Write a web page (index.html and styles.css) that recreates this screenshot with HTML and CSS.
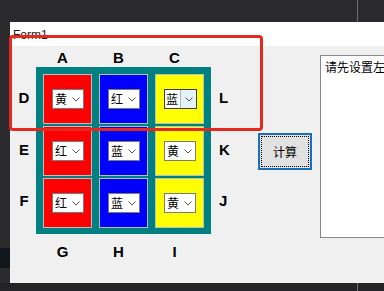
FILE: index.html
```html
<!DOCTYPE html>
<html lang="zh-CN">
<head>
  <meta charset="UTF-8" />
  <title>Form1</title>
  <link rel="stylesheet" href="styles.css">
</head>
<body>

<div class="topbar"><div class="sep"></div></div>

<div class="screen">
  <div class="side"><div class="side-block"></div></div>

  <div class="window">
    <div class="titlebar">Form1</div>
    <div class="client">
      <div class="board">
        <div></div>
        <div class="col-labels top"><span>A</span><span>B</span><span>C</span></div>
        <div></div>

        <div class="row-labels left"><span>D</span><span>E</span><span>F</span></div>
        <div class="panel">
          <div class="cell red"><div class="combo"><span class="val">黄</span><span class="arrow"><svg width="8" height="5" viewBox="0 0 8 5"><polyline points="0.5,0.5 4,4 7.5,0.5" fill="none" stroke="#555" stroke-width="1"/></svg></span></div></div>
          <div class="cell blue"><div class="combo"><span class="val">红</span><span class="arrow"><svg width="8" height="5" viewBox="0 0 8 5"><polyline points="0.5,0.5 4,4 7.5,0.5" fill="none" stroke="#555" stroke-width="1"/></svg></span></div></div>
          <div class="cell yellow"><div class="combo focus"><span class="val">蓝</span><span class="arrow"><svg width="8" height="5" viewBox="0 0 8 5"><polyline points="0.5,0.5 4,4 7.5,0.5" fill="none" stroke="#555" stroke-width="1"/></svg></span></div></div>

          <div class="cell red"><div class="combo"><span class="val">红</span><span class="arrow"><svg width="8" height="5" viewBox="0 0 8 5"><polyline points="0.5,0.5 4,4 7.5,0.5" fill="none" stroke="#555" stroke-width="1"/></svg></span></div></div>
          <div class="cell blue"><div class="combo"><span class="val">蓝</span><span class="arrow"><svg width="8" height="5" viewBox="0 0 8 5"><polyline points="0.5,0.5 4,4 7.5,0.5" fill="none" stroke="#555" stroke-width="1"/></svg></span></div></div>
          <div class="cell yellow"><div class="combo"><span class="val">黄</span><span class="arrow"><svg width="8" height="5" viewBox="0 0 8 5"><polyline points="0.5,0.5 4,4 7.5,0.5" fill="none" stroke="#555" stroke-width="1"/></svg></span></div></div>

          <div class="cell red"><div class="combo"><span class="val">红</span><span class="arrow"><svg width="8" height="5" viewBox="0 0 8 5"><polyline points="0.5,0.5 4,4 7.5,0.5" fill="none" stroke="#555" stroke-width="1"/></svg></span></div></div>
          <div class="cell blue"><div class="combo"><span class="val">蓝</span><span class="arrow"><svg width="8" height="5" viewBox="0 0 8 5"><polyline points="0.5,0.5 4,4 7.5,0.5" fill="none" stroke="#555" stroke-width="1"/></svg></span></div></div>
          <div class="cell yellow"><div class="combo"><span class="val">黄</span><span class="arrow"><svg width="8" height="5" viewBox="0 0 8 5"><polyline points="0.5,0.5 4,4 7.5,0.5" fill="none" stroke="#555" stroke-width="1"/></svg></span></div></div>
        </div>
        <div class="row-labels right"><span>L</span><span>K</span><span>J</span></div>

        <div></div>
        <div class="col-labels bottom"><span>G</span><span>H</span><span>I</span></div>
        <div></div>
      </div>

      <button class="calc">计算</button>

      <div class="output">请先设置左</div>
    </div>
  </div>
</div>

<div class="bottombar"><div class="sep"></div></div>

<div class="highlight"></div>

</body>
</html>
```

FILE: styles.css
```css
body {
  margin: 0;
  background-color: #2b2b2f;
  font-family: "Liberation Sans", "Noto Sans CJK SC", sans-serif;
  width: 384px;
  height: 291px;
  overflow: hidden;
  position: relative;
}
.topbar {
  height: 22px;
  background-color: #2a2a2e;
}
.bottombar {
  height: 8px;
  background-color: #242427;
}
.sep {
  margin-left: 357px;
  width: 1px;
  height: 100%;
  background-color: #6e6e70;
}
.screen {
  display: flex;
  height: 261px;
}
.side {
  width: 10px;
  background-color: #2b2b2d;
}
.side-block {
  margin-top: 226px;
  height: 20px;
  background-color: #10161b;
}
.window {
  flex: 1;
  overflow: hidden;
  display: flex;
  flex-direction: column;
}
.titlebar {
  height: 24px;
  background-color: #ffffff;
  color: #1a1a1a;
  font-size: 12px;
  line-height: 14px;
  padding: 6px 0 0 3px;
  box-sizing: border-box;
}
.client {
  flex: 1;
  background-color: #f0f0f0;
  display: flex;
  align-items: flex-start;
}
.board {
  flex-shrink: 0;
  display: grid;
  grid-template-columns: 26px 175px 47px;
  grid-template-rows: 21px 167px auto;
}
.col-labels {
  display: flex;
  gap: 7px;
  padding-left: 2px;
  font-weight: bold;
  font-size: 15px;
  color: #000;
}
.col-labels span {
  width: 49px;
  text-align: center;
}
.col-labels.top {
  padding-top: 2px;
  line-height: 19px;
}
.col-labels.bottom {
  margin-top: 8px;
  line-height: 20px;
}
.row-labels {
  display: flex;
  flex-direction: column;
  gap: 2px;
  padding: 7px 0;
  font-weight: bold;
  font-size: 15px;
  color: #000;
}
.row-labels span {
  height: 50px;
  line-height: 48px;
}
.row-labels.left span {
  text-align: center;
  padding-left: 2px;
}
.row-labels.right span {
  padding-left: 8px;
}
.panel {
  background-color: #008080;
  padding: 7px 7px 6px 7px;
  display: grid;
  grid-template-columns: repeat(3, 49px);
  grid-template-rows: repeat(3, 50px);
  column-gap: 7px;
  row-gap: 2px;
}
.cell {
  border: 1px solid #b9c2c2;
  box-sizing: border-box;
  display: flex;
  align-items: center;
  justify-content: center;
}
.red { background-color: #ff0000; }
.blue { background-color: #0000ff; }
.yellow { background-color: #ffff00; }
.combo {
  width: 32px;
  height: 20px;
  box-sizing: border-box;
  border: 1px solid #7a7a7a;
  background-color: #ffffff;
  display: flex;
  margin-left: 1px;
}
.combo .val {
  flex: 1;
  font-family: "Noto Sans CJK SC", sans-serif;
  font-size: 12px;
  line-height: 18px;
  padding-left: 2px;
  color: #000;
}
.combo .arrow {
  width: 14px;
  display: flex;
  align-items: center;
  justify-content: center;
}
.combo.focus {
  width: 33px;
  border-color: #3c3c3c;
  margin-left: 2px;
}
.combo.focus .val {
  flex: none;
  width: 14px;
  padding-left: 1px;
  border-right: 1px solid #a8b8c8;
}
.combo.focus .arrow {
  flex: 1;
  background-color: #e5f1fb;
}
.calc {
  flex-shrink: 0;
  margin-top: 87px;
  width: 54px;
  height: 37px;
  padding: 0;
  border: 2px solid #1c6fb5;
  background-color: #e1e1e1;
  font-family: "Noto Sans CJK SC", sans-serif;
  font-size: 12px;
  color: #000;
  position: relative;
}
.calc::after {
  content: "";
  position: absolute;
  inset: 1px;
  border: 1px dotted #000;
}
.output {
  margin: 9px 0 0 8px;
  width: 80px;
  height: 183px;
  flex-shrink: 0;
  box-sizing: border-box;
  border: 1px solid #828790;
  background-color: #ffffff;
  padding: 2px 4px;
  font-family: "Noto Sans CJK SC", sans-serif;
  font-size: 12px;
  line-height: 17px;
  white-space: nowrap;
  overflow: hidden;
  color: #000;
}
.highlight {
  position: absolute;
  left: 9px;
  top: 35px;
  width: 254px;
  height: 96px;
  box-sizing: border-box;
  border: 3px solid #e5291f;
  border-radius: 4px;
}
```
